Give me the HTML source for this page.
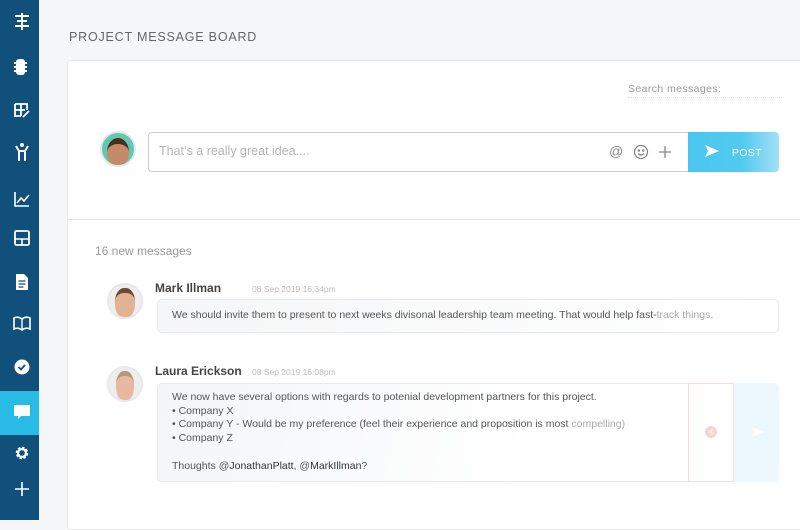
<!DOCTYPE html><html><head><meta charset="utf-8"><style>
*{box-sizing:border-box;margin:0;padding:0}
body{width:800px;height:520px;overflow:hidden;background:#f5f6f7;font-family:"Liberation Sans",sans-serif;position:relative}
.sb{position:absolute;left:0;top:0;width:39px;height:520px;background:#11507a}
.act{position:absolute;left:0;top:391px;width:39px;height:44px;background:#27bbe5}
.title{position:absolute;left:69px;top:30px;font-size:12.5px;letter-spacing:.8px;color:#666}
.card{position:absolute;left:67px;top:60px;width:740px;height:470px;background:#fff;border:1px solid #e6e6e6;border-radius:3px}
.abs{position:absolute}
.av{position:absolute;width:36px;height:36px;border-radius:50%;border:2px solid #e8e8e8;overflow:hidden}
.bub{position:absolute;border:1px solid #e8eaec;border-radius:5px;background:linear-gradient(90deg,#f5f6f7,#fff);font-size:10.5px;color:#555;}
.name{position:absolute;font-size:12px;font-weight:bold;color:#444}
.dt{position:absolute;font-size:8.5px;color:#bbb}
</style></head><body>
<div class="sb"></div>
<div class="act"></div>
<svg class="abs" style="left:0;top:0" width="39" height="520" fill="none" stroke="#fff" stroke-width="2">
<path d="M22 13v17M15 16h14M17 21h10M15 26h14"/>
<rect x="16" y="59" width="9" height="16" rx="3" fill="#fff" stroke="none"/><path d="M14 63h3M14 67h3M14 71h3M24 63h3M24 67h3M24 71h3" />
<path d="M15 104h12v6M15 104v12h6M15 110h10M21 104v12M23 117l6-6" stroke-width="1.8"/>
<circle cx="22" cy="145" r="2" fill="#fff" stroke="none"/><path d="M16 146l3 5v10M28 146l-3 5v10M19 151h6"/>
<path d="M15 192v14h14M17 203l4-5 3 3 5-6" stroke-width="1.6"/>
<rect x="15" y="231" width="14" height="14" rx="1.5" stroke-width="1.8"/><path d="M15 239h14M22 239v6" stroke-width="1.6"/>
<path d="M16 274h8l4 4v12h-12z" fill="#fff" stroke="none"/><path d="M18.5 281h7M18.5 284h7M18.5 287h5" stroke="#11507a" stroke-width="1.2"/>
<path d="M14 318q4-2 8 1q4-3 8-1v11q-4-2-8 1q-4-3-8-1z" stroke-width="1.6"/><path d="M22 319v11" stroke-width="1.4"/>
<circle cx="22" cy="367" r="7.5" fill="#fff" stroke="none"/><path d="M18.5 367l2.5 2.5 4-4.5" stroke="#11507a" stroke-width="1.8"/>
<path d="M14 405h16v11h-9l-3 3v-3h-4z" fill="#fff" stroke="none"/>
<circle cx="22" cy="453" r="4.5" stroke-width="3.5" stroke-dasharray="2.2 1.3"/><circle cx="22" cy="453" r="4" stroke-width="2"/>
<path d="M22 482v14M15 489h14" stroke-width="1.6"/>
</svg>
<div class="title">PROJECT MESSAGE BOARD</div>
<div class="card">
<div class="abs" style="left:560px;top:22px;font-size:10.5px;color:#999;letter-spacing:.4px">Search messages:</div>
<div class="abs" style="left:560px;top:36px;width:154px;border-top:1px dotted #ddd"></div>
<div class="av" style="left:32px;top:70px;background:#5ec9ae"><div style="margin:5px auto 0;width:22px;height:28px;border-radius:50% 50% 45% 45%;background:#c48a6a;border-top:6px solid #4a2d20"></div></div>
<div class="abs" style="left:80px;top:71px;width:540px;height:40px;border:1.5px solid #ccc;border-right:none;border-radius:4px 0 0 4px"></div>
<div class="abs" style="left:91px;top:83px;font-size:12.5px;color:#b5b5b5">That’s a really great idea....</div>
<div class="abs" style="left:541px;top:82px;font-size:14px;color:#888">@</div>
<svg class="abs" style="left:565px;top:83px" width="16" height="16" fill="none" stroke="#888" stroke-width="1.3"><circle cx="8" cy="8" r="6.5"/><circle cx="5.8" cy="6.5" r=".6" fill="#888"/><circle cx="10.2" cy="6.5" r=".6" fill="#888"/><path d="M5 9.5q3 3 6 0"/></svg>
<svg class="abs" style="left:591px;top:85px" width="12" height="12" stroke="#888" stroke-width="1.3"><path d="M6 0v12M0 6h12"/></svg>
<div class="abs" style="left:620px;top:71px;width:91px;height:40px;border-radius:0 4px 4px 0;background:linear-gradient(90deg,#49c6ef,#52caf0 60%,#a3e0f6)"></div>
<svg class="abs" style="left:637px;top:84px" width="14" height="12"><path d="M0 0l14 6-14 6 3-6z" fill="#fff"/></svg>
<div class="abs" style="left:664px;top:86px;font-size:10.5px;color:#fff;letter-spacing:.3px">POST</div>
<div class="abs" style="left:0;top:158px;width:740px;border-top:1px solid #e6e6e6"></div>
<div class="abs" style="left:27px;top:183px;font-size:12px;color:#999">16 new messages</div>
<div class="av" style="left:39px;top:222px;background:#eee"><div style="margin:3px auto 0;width:20px;height:30px;border-radius:45%;background:#e2b294;border-top:5px solid #6a4a35"></div></div>
<div class="name" style="left:87px;top:220px">Mark Illman</div>
<div class="dt" style="left:184px;top:223px">08 Sep 2019 16:34pm</div>
<div class="bub" style="left:89px;top:238px;width:622px;height:34px;padding:9px 14px">We should invite them to present to next weeks divisonal leadership team meeting. That would help fast-<span style="color:#aaa">track things.</span></div>
<div class="av" style="left:39px;top:305px;background:#eee"><div style="margin:3px auto 0;width:18px;height:30px;border-radius:45%;background:#e8b8a0;border-top:5px solid #b09a7a"></div></div>
<div class="name" style="left:87px;top:303px">Laura Erickson</div>
<div class="dt" style="left:184px;top:306px">08 Sep 2019 16:08pm</div>
<div class="bub" style="left:89px;top:322px;width:622px;height:99px;padding:7px 14px;line-height:13.7px;background:linear-gradient(100deg,#f3f5f7,#fff 60%)">We now have several options with regards to potenial development partners for this project.<br>• Company X<br>• Company Y - Would be my preference (feel their experience and proposition is most <span style="color:#aaa">compelling)</span><br>• Company Z<br><br>Thoughts @<span style="color:#333">JonathanPlatt</span>, @<span style="color:#333">MarkIllman</span>?</div>
<div class="abs" style="left:620px;top:322px;width:46px;height:99px;border:1px solid #fadada;background:#fff"></div>
<div class="abs" style="left:637px;top:365px;width:12px;height:12px;border-radius:50%;background:#f9d2d2;color:#fff;font-size:9px;text-align:center;line-height:12px">×</div>
<div class="abs" style="left:666px;top:322px;width:45px;height:99px;background:#ecf8fd;border-radius:0 5px 5px 0"></div>
<svg class="abs" style="left:684px;top:366px" width="12" height="10"><path d="M0 0l12 5-12 5 2-5z" fill="#fff"/></svg>
</div>
</body></html>
